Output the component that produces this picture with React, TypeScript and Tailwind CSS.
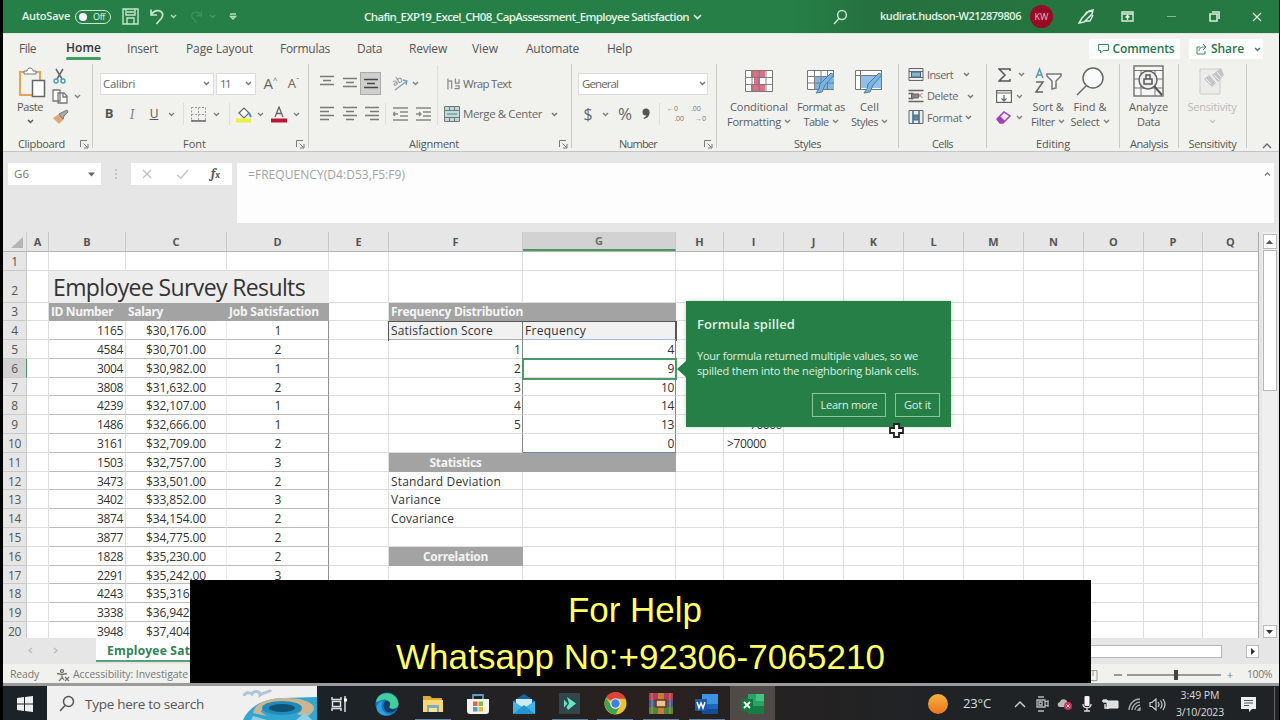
import React, { useLayoutEffect, useRef, useState } from "react";

/** Text whose letter spacing is adjusted so that the run is `w` pixels wide. */
function Fit({ w, className = "", children }: { w: number; className?: string; children: string }) {
  const ref = useRef<HTMLSpanElement>(null);
  const [ls, setLs] = useState(0);
  useLayoutEffect(() => {
    if (ref.current) {
      const natural = ref.current.getBoundingClientRect().width - ls * children.length;
      setLs((w - natural) / children.length);
    }
  }, [w, children]);
  return (
    <span ref={ref} className={"inline-block shrink-0 whitespace-pre " + className} style={{ letterSpacing: ls + "px" }}>
      {children}
    </span>
  );
}

function Chev({ className = "text-[#808080]" }: { className?: string }) {
  return (
    <svg className={"shrink-0 " + className} width="7" height="5" viewBox="0 0 7 5">
      <path d="M1 1l2.5 2.5L6 1" fill="none" stroke="currentColor" strokeWidth="1.4" />
    </svg>
  );
}

function Slot({ className, children }: { className: string; children?: React.ReactNode }) {
  return <div className={"flex shrink-0 items-center justify-center " + className}>{children}</div>;
}

function Launcher() {
  return (
    <svg width="9" height="9" viewBox="0 0 9 9" fill="none" stroke="#777" strokeWidth="1">
      <path d="M.5 7V.5H7M3.5 3.5l4 4M8 4v4H4" />
    </svg>
  );
}

function Group({ className, label, lw, launch, children }: { className: string; label: string; lw: number; launch?: boolean; children: React.ReactNode }) {
  return (
    <div className={"flex h-[84px] shrink-0 flex-col border-r border-[#c9c9c7] " + className}>
      <div className="h-[72px] shrink-0">{children}</div>
      <div className="flex h-[16px] shrink-0 items-center text-[11px] leading-[16px] text-[#555]">
        <div className="flex flex-1 justify-center">
          <Fit w={lw}>{label}</Fit>
        </div>
        {launch && <div className="mr-[3px]"><Launcher /></div>}
      </div>
    </div>
  );
}

function Lines({ rows, dark }: { rows: [number, number][]; dark?: boolean }) {
  return (
    <svg width="16" height="18" viewBox="0 0 16 18">
      {rows.map(([x, w], i) => (
        <path key={i} d={`M${x} ${2.5 + i * 4}h${w}`} stroke={dark ? "#444" : "#7a7a7a"} strokeWidth="1.5" />
      ))}
    </svg>
  );
}

function TitleBar() {
  return (
    <div className="flex h-[33px] items-center bg-gradient-to-r from-[#267f47] from-62% via-[#25713f] via-68% to-[#257a43] text-[#e3f3e6]">
      <Fit w={48} className="ml-[19px] text-[11px] font-semibold">AutoSave</Fit>
      <div className="ml-[5px] flex h-[14px] w-[36px] items-center justify-between rounded-full border border-[#cfe8d4] pr-[5px] pl-[3px]">
        <div className="h-[8px] w-[8px] rounded-full bg-white" />
        <Fit w={12} className="text-[9px] leading-[12px]">Off</Fit>
      </div>
      <svg className="ml-[11px]" width="17" height="17" viewBox="0 0 17 17" fill="none" stroke="#c5e6cd" strokeWidth="1.4">
        <path d="M1 1h15v15H1zM4 1v6h9V1M5 16v-6h7v6M5 4h7" />
      </svg>
      <svg className="ml-[10px]" width="17" height="17" viewBox="0 0 17 17" fill="none" stroke="#c5e6cd" strokeWidth="1.7">
        <path d="M2 1.5v5.5h6M2 7C5 2 11 1 13.5 5.5C15 10 10 12 7.500 16" />
      </svg>
      <Chev className="ml-[4px] text-[#b8dcc1]" />
      <svg className="ml-[12px]" width="14" height="16" viewBox="0 0 17 17" fill="none" stroke="#3b9159" strokeWidth="1.7">
        <path d="M15 1.500v5.500h-6M15 7C12 2 6 1 3.500 5.500C2 10 7 12 9.500 16" />
      </svg>
      <Chev className="ml-[6px] text-[#459963]" />
      <svg className="ml-[13px]" width="8" height="8" viewBox="0 0 8 8" fill="none" stroke="#b8dcc1" strokeWidth="1.3">
        <path d="M1 1h6M1.500 3.500L4 6l2.500-2.500z" />
      </svg>
      <Fit w={325} className="ml-[127px] text-[11.5px] font-semibold">Chafin_EXP19_Excel_CH08_CapAssessment_Employee Satisfaction</Fit>
      <svg className="ml-[4px]" width="9" height="6" viewBox="0 0 9 6" fill="none" stroke="#e3f3e6" strokeWidth="1.6"><path d="M1 1l3.500 3.500L8 1" /></svg>
      <svg className="ml-[131px]" width="16" height="16" viewBox="0 0 16 16" fill="none" stroke="#c9e5cf" strokeWidth="1.5"><circle cx="9" cy="6" r="4.400" /><path d="M6 9.500L1 15" /></svg>
      <Fit w={141} className="ml-[31px] text-[11px] font-semibold">kudirat.hudson-W212879806</Fit>
      <div className="ml-[9px] flex h-[23px] w-[23px] items-center justify-center rounded-full bg-[#960c26] text-[9px] text-[#efb7c1]">KW</div>
      <svg className="ml-[25px]" width="17" height="15" viewBox="0 0 17 15" fill="none" stroke="#d7eedb" strokeWidth="1.5"><path d="M1 14l5-1 8-8 1-4-4 1-7 7zM6 7l3-4 5-1M7 12h5l3-6" /></svg>
      <svg className="ml-[26px]" width="13" height="11" viewBox="0 0 13 11" fill="none" stroke="#d7eedb" strokeWidth="1.400"><path d="M1 1h11v9H1zM1 3h11M6.500 9V5M4.500 6.500l2-2 2 2" /></svg>
      <div className="ml-[33px] h-[1.500px] w-[9px] bg-[#7fba90]" />
      <svg className="ml-[33px]" width="11" height="11" viewBox="0 0 11 11" fill="none" stroke="#d7eedb" strokeWidth="1.600"><path d="M1 3h7v7H1zM3 1h7v7" /></svg>
      <svg className="ml-[32px]" width="10" height="10" viewBox="0 0 10 10" fill="none" stroke="#d7eedb" strokeWidth="1.300"><path d="M1 1l8 8M9 1L1 9" /></svg>
    </div>
  );
}

function MenuTabs() {
  return (
    <div className="flex h-[31px] items-center border-t border-[#d9eadc] bg-[#f1f2ee] text-[12px] text-[#555]">
      <Fit w={17} className="ml-[16px]">File</Fit>
      <div className="ml-[30px] flex h-full flex-col items-center pt-[5px]">
        <Fit w={35} className="font-semibold leading-[18px] text-[#333]">Home</Fit>
        <div className="h-[3px] w-[35px] rounded bg-[#3f9d5f]" />
      </div>
      <Fit w={31} className="ml-[26px]">Insert</Fit>
      <Fit w={67} className="ml-[28px]">Page Layout</Fit>
      <Fit w={50} className="ml-[27px]">Formulas</Fit>
      <Fit w={25} className="ml-[27px]">Data</Fit>
      <Fit w={38} className="ml-[27px]">Review</Fit>
      <Fit w={26} className="ml-[25px]">View</Fit>
      <Fit w={53} className="ml-[28px]">Automate</Fit>
      <Fit w={25} className="ml-[28px]">Help</Fit>
      <div className="mr-[16px] ml-auto flex gap-[9px] text-[#26764a]">
        <div className="flex h-[20px] w-[91px] items-center justify-center gap-[4px] bg-white pl-[3px]">
          <svg width="11" height="10" viewBox="0 0 11 10" fill="none" stroke="#3d8a5a"><path d="M.5.5h10v6H5L2.500 9V6.500h-2z" /></svg>
          <Fit w={62} className="font-semibold leading-[20px]">Comments</Fit>
        </div>
        <div className="flex h-[20px] w-[74px] items-center bg-white pl-[7px]">
          <svg width="11" height="12" viewBox="0 0 11 12" fill="none" stroke="#3d8a5a"><path d="M4 4H1v7h8V8M3 8c0-3 2-4 6-4M7 1l3 3-3 3" /></svg>
          <Fit w={33} className="ml-[4px] font-semibold leading-[20px]">Share</Fit>
          <Chev className="ml-[10px] text-[#3d8a5a]" />
        </div>
      </div>
    </div>
  );
}

function BigButton({ className, icon, a, aw, b, bw, chev, dim }: { className: string; icon: React.ReactNode; a: string; aw: number; b?: string; bw?: number; chev?: boolean; dim?: boolean }) {
  return (
    <div className={"flex h-[68px] shrink-0 flex-col items-center text-[11px] leading-[15px] " + (dim ? "text-[#b9b9b9] " : "text-[#5c5c5c] ") + className}>
      <div className="flex h-[34px] items-center">{icon}</div>
      <Fit w={aw} className="mt-[1px]">{a}</Fit>
      <div className="flex h-[15px] items-center gap-[3px]">
        {b && <Fit w={bw || 30}>{b}</Fit>}
        {chev && <Chev className={dim ? "text-[#c4c4c4]" : "text-[#808080]"} />}
      </div>
    </div>
  );
}

function Brush() {
  return <path d="M27 8l-9 10-3 7-6 1 3-4 1-5L24 6z" fill="#79b4e3" stroke="#4b7ba3" strokeWidth="1" />;
}

function Ribbon() {
  return (
    <div className="flex h-[88px] items-start border-b border-[#c4c4c4] bg-[#f1f2ee]">
      <Group className="w-[90px]" label="Clipboard" lw={47} launch>
        <div className="flex">
          <div className="flex w-[54px] flex-col items-center text-[#555]">
            <svg className="mt-[3px] ml-[4px]" width="28" height="32" viewBox="0 0 28 32" fill="none">
              <path d="M7 5H2v23h12M18 5h4v8" stroke="#e3a652" strokeWidth="2" />
              <path d="M6 7V4h3c0-4 6-4 6 0h3v3z" fill="#fff" stroke="#777" />
              <path d="M14.500 13.500h12v16h-12z" fill="#fff" stroke="#666" strokeWidth="1.500" />
            </svg>
            <Fit w={26} className="text-[11px] leading-[16px]">Paste</Fit>
            <Chev className="mt-[4px]" />
          </div>
          <div className="flex flex-col gap-[5px] pt-[4px]">
            <svg className="-ml-[4px]" width="14" height="16" viewBox="0 0 14 16" fill="none" strokeWidth="1.500"><path d="M3 1l6 10M10 1L4 11" stroke="#666" /><circle cx="3" cy="13" r="2" stroke="#4b9dbd" /><circle cx="10" cy="13" r="2" stroke="#4b9dbd" /></svg>
            <div className="-ml-[5px] flex items-center gap-[6px]">
              <svg width="16" height="15" viewBox="0 0 16 15" fill="#fff" stroke="#777" strokeWidth="1.300"><path d="M1 1h7v11H1zM6 4h6l3 3v7H6zM11 4v4h4" /></svg>
              <Chev />
            </div>
            <svg className="-ml-[5px]" width="17" height="16" viewBox="0 0 17 16"><path d="M1 9l6-4 5 5-5 5z" fill="#e0a877" /><path d="M7 5l4-2 4-2 1 2-4 4-1 3z" fill="#aaa" stroke="#777" /></svg>
          </div>
        </div>
      </Group>

      <Group className="w-[216px]" label="Font" lw={23} launch>
        <div className="mt-[8px] flex h-[23px] items-center pl-[7px] text-[11.500px] text-[#666]">
          <div className="flex h-[22px] w-[114px] items-center border border-[#dcdcdc] bg-white px-[2px]"><Fit w={32}>Calibri</Fit><Chev className="mr-[1px] ml-auto text-[#777]" /></div>
          <div className="ml-[2px] flex h-[22px] w-[40px] items-center border border-[#dcdcdc] bg-white px-[3px]"><Fit w={10}>11</Fit><Chev className="ml-auto text-[#777]" /></div>
          <Slot className="ml-[3px] w-[23px]"><span className="text-[15px]">A</span><span className="mb-[8px] text-[8px]">^</span></Slot>
          <Slot className="w-[23px]"><span className="text-[13px]">A</span><span className="mb-[8px] text-[8px]">ˇ</span></Slot>
        </div>
        <div className="mt-[8px] flex h-[22px] items-center pl-[2px] text-[#555]">
          <Slot className="w-[28px] text-[13px] font-bold">B</Slot>
          <Slot className="w-[18px] font-serif text-[14px] italic text-[#888]">I</Slot>
          <Slot className="w-[26px] text-[12px] underline">U</Slot>
          <Slot className="w-[8px]"><Chev /></Slot>
          <Slot className="ml-[8px] w-[1px] self-stretch bg-[#dedede]" />
          <Slot className="w-[28px]"><svg width="15" height="15" viewBox="0 0 15 15" fill="none" stroke="#999"><path d="M.5.5h14v13H.500zM7.500.500v13M.500 7.500h14" strokeDasharray="2 1.500" /><path d="M0 14h15" stroke="#666" strokeWidth="1.500" /></svg></Slot>
          <Slot className="w-[8px]"><Chev /></Slot>
          <Slot className="ml-[9px] w-[1px] self-stretch bg-[#dedede]" />
          <Slot className="w-[26px]"><svg width="17" height="17" viewBox="0 0 17 17"><path d="M4 7l5-5 5 5-5 5z" fill="#fff" stroke="#666" strokeWidth="1.200" /><path d="M14 7l2 4" stroke="#4b8fc0" strokeWidth="2" /><path d="M1 14.500h15" stroke="#e6f23f" strokeWidth="4" /></svg></Slot>
          <Slot className="w-[8px]"><Chev /></Slot>
          <Slot className="ml-[3px] w-[24px]"><svg width="16" height="17" viewBox="0 0 16 17"><path d="M4 11L8 1l4 10M5.500 7.500h5" fill="none" stroke="#666" strokeWidth="1.300" /><path d="M0 14.500h16" stroke="#bd1738" strokeWidth="4" /></svg></Slot>
          <Slot className="w-[10px]"><Chev /></Slot>
        </div>
      </Group>

      <Group className="w-[263px]" label="Alignment" lw={50} launch>
        <div className="flex">
          <div className="w-[128px]">
            <div className="mt-[8px] flex h-[23px] items-center pl-[6px]">
              <Slot className="w-[24px] pb-[2px]"><Lines rows={[[1, 14], [4, 8], [1, 14]]} /></Slot>
              <Slot className="w-[21px] pt-[2px]"><Lines rows={[[1, 14], [4, 8], [1, 14]]} /></Slot>
              <Slot className="h-[23px] w-[21px] border border-[#aaa] bg-[#cfcfcf] pt-[5px]"><Lines rows={[[1, 14], [4, 8], [1, 14]]} dark /></Slot>
              <div className="relative ml-[10px] flex h-[18px] w-[18px] items-center justify-center">
                <svg width="18" height="16" viewBox="0 0 18 16" fill="none" stroke="#7fa1b8" strokeWidth="1.300"><path d="M4 14L16 5M12 4l4 1-1 4" /></svg>
                <span className="absolute top-0 left-[1px] -rotate-30 text-[9px] leading-[12px] text-[#777]">ab</span>
              </div>
              <Slot className="ml-[2px] w-[8px]"><Chev /></Slot>
            </div>
            <div className="mt-[8px] flex h-[22px] items-center pl-[6px]">
              <Slot className="w-[24px]"><Lines rows={[[1, 14], [1, 9], [1, 14], [1, 9]]} /></Slot>
              <Slot className="w-[21px]"><Lines rows={[[1, 14], [4, 8], [1, 14], [4, 8]]} /></Slot>
              <Slot className="w-[23px]"><Lines rows={[[1, 14], [6, 9], [1, 14], [6, 9]]} /></Slot>
              <Slot className="ml-[2px] w-[1px] self-stretch bg-[#dedede]" />
              <Slot className="ml-[3px] w-[23px]"><svg width="15" height="16" viewBox="0 0 15 16" stroke="#888" fill="none" strokeWidth="1.400"><path d="M0 2h15M7 6h8M7 10h8M0 14h15M5 8H0M2 6L0 8l2 2" /></svg></Slot>
              <Slot className="w-[23px]"><svg width="15" height="16" viewBox="0 0 15 16" stroke="#888" fill="none" strokeWidth="1.400"><path d="M0 2h15M7 6h8M7 10h8M0 14h15M0 8h5M3 6l2 2-2 2" /></svg></Slot>
            </div>
          </div>
          <div className="h-[60px] w-[1px] self-center bg-[#dedede]" />
          <div className="text-[11.500px] text-[#666]">
            <div className="mt-[8px] flex h-[23px] items-center pl-[9px]">
              <svg width="13" height="14" viewBox="0 0 14 14" fill="none" stroke="#888"><path d="M1 1v12M5 3v9M1 4h4M9 1v5h4V2M9 9h4v3H8" strokeWidth="1.300" /></svg>
              <Fit w={48} className="ml-[3px]">Wrap Text</Fit>
            </div>
            <div className="mt-[8px] flex h-[22px] items-center pl-[6px]">
              <svg width="16" height="16" viewBox="0 0 16 16" fill="none" stroke="#777"><path d="M.5.5h15v15H.500z" fill="#b9dcdf" /><path d="M.5 4.500h15M.5 11.500h15M5.500.500v4M10.500.500v4M5.500 11.500v4M10.500 11.500v4M3 8h10" /></svg>
              <Fit w={79} className="ml-[3px]">Merge & Center</Fit>
              <Chev className="ml-[9px] text-[#777]" />
            </div>
          </div>
        </div>
      </Group>

      <Group className="w-[145px]" label="Number" lw={38} launch>
        <div className="mt-[8px] flex h-[23px] items-center pl-[6px] text-[11.500px] text-[#666]">
          <div className="flex h-[22px] w-[130px] items-center border border-[#dcdcdc] bg-white pr-[1px] pl-[3px]"><Fit w={36}>General</Fit><Chev className="ml-auto text-[#777]" /></div>
        </div>
        <div className="mt-[8px] flex h-[22px] items-center pl-[6px] text-[#666]">
          <Slot className="w-[20px] text-[16px]">$</Slot>
          <Slot className="w-[15px]"><Chev /></Slot>
          <Slot className="w-[24px] text-[17px]">%</Slot>
          <svg className="ml-[4px]" width="10" height="12" viewBox="0 0 10 12"><circle cx="5" cy="4" r="3.500" fill="#555" /><path d="M8.500 4c0 4-2 6-5.500 7l-.5-1c2-1 3-2 3-4z" fill="#555" /></svg>
          <Slot className="ml-[8px] w-[1px] self-stretch bg-[#dedede]" />
          <div className="ml-[7px] flex w-[17px] flex-col text-[7px] leading-[10px] text-[#777]"><span>←0</span><span className="self-end">.00</span></div>
          <div className="ml-[7px] flex w-[15px] flex-col text-[7px] leading-[10px] text-[#777]"><span>.00</span><span className="self-end">→0</span></div>
        </div>
      </Group>

      <Group className="w-[182px]" label="Styles" lw={27}>
        <div className="flex">
          <BigButton className="w-[84px]" a="Conditional" aw={58} b="Formatting" bw={54} chev icon={
            <svg width="28" height="24" viewBox="0 0 28 24"><path d="M.5 1.500h27v21H.500z" fill="#fff" stroke="#777" /><path d="M6 2h14v7H6zM6 15h14v7H6zM9 9h6v6H9z" fill="#dc6f87" /><path d="M7 1v22M14 1v22M21 1v22M1 8.500h27M1 15.500h27" stroke="#777" strokeWidth=".9" /></svg>} />
          <BigButton className="w-[40px]" a="Format as" aw={48} b="Table" bw={25} chev icon={
            <svg width="29" height="28" viewBox="0 0 29 28"><path d="M.5 3.500h26v19H.500z" fill="#fff" stroke="#777" /><path d="M8 9h19v13H8z" fill="#7fb5e2" /><path d="M7.500 3v19M14 3v19M20.500 3v19M1 9.500h26M1 16h26" stroke="#777" strokeWidth=".9" /><Brush /></svg>} />
          <BigButton className="w-[57px]" a="Cell" aw={19} b="Styles" bw={27} chev icon={
            <svg width="29" height="28" viewBox="0 0 29 28"><path d="M.5 3.500h26v19H.500z" fill="#fff" stroke="#777" /><path d="M6 8h20v13H6z" fill="#8fc0ea" /><path d="M5.500 3v19M1 8.500h26" stroke="#777" /><Brush /></svg>} />
        </div>
      </Group>

      <Group className="w-[88px]" label="Cells" lw={21}>
        <div className="flex flex-col pl-[9px] text-[11px] text-[#666]">
          <div className="flex h-[21.500px] items-center"><svg width="16" height="14" viewBox="0 0 15 14" fill="none" stroke="#666"><path d="M.5.5h14v12H.500z" fill="#e8eef0" /><path d="M3 4h9v5H3z" fill="#79b8ce" stroke="#558" /><path d="M.5 3.500h14M.5 9.500h14" /></svg><Fit w={26} className="ml-[3px]">Insert</Fit><Chev className="ml-[10px] text-[#777]" /></div>
          <div className="flex h-[21.500px] items-center"><svg width="16" height="14" viewBox="0 0 15 14" fill="none" stroke="#666"><path d="M0 1.500h15M0 12.500h15M0 4.500h5M0 9.500h5" strokeWidth="1.400" /><path d="M3 5h7v4H3z" fill="#888" /><path d="M9 4l5 5M14 4L9 9" stroke="#c26a78" /></svg><Fit w={31} className="ml-[3px]">Delete</Fit><Chev className="ml-[9px] text-[#777]" /></div>
          <div className="flex h-[21.500px] items-center"><svg width="16" height="15" viewBox="0 0 15 15" fill="none" stroke="#666"><path d="M.5.5h14v13H.500z" fill="#e8eef0" /><path d="M4.500 1v13M10.500 1v13" stroke="#3d6e8c" strokeWidth="1.500" /><path d="M5 5h5v5H5z" fill="#4d8eb4" /></svg><Fit w={35} className="ml-[3px]">Format</Fit><Chev className="ml-[3px] text-[#777]" /></div>
        </div>
      </Group>

      <Group className="w-[133px]" label="Editing" lw={34}>
        <div className="flex pl-[9px]">
          <div className="flex w-[32px] flex-col">
            <div className="flex h-[21.500px] items-center gap-[7px] pl-[2px]"><svg width="13" height="14" viewBox="0 0 13 14" fill="none" stroke="#555" strokeWidth="1.500"><path d="M12 3V1H1l6 6-6 6h11v-2" /></svg><Chev /></div>
            <div className="flex h-[21.500px] items-center gap-[4px]"><svg width="16" height="13" viewBox="0 0 16 13" fill="#fff" stroke="#666" strokeWidth="1.200"><path d="M.6.6h14.800v11.800H.600zM.6 3h14.800M8 5v6M5.500 8.500L8 11l2.500-2.500" /></svg><Chev /></div>
            <div className="flex h-[21.500px] items-center gap-[5px]"><svg width="15" height="13" viewBox="0 0 15 13"><path d="M1 8l7-7 6 4-7 7H4z" fill="#f3e6f6" stroke="#a33fb8" strokeWidth="1.500" /><path d="M1 8l3-3 5 5-2 2H4z" fill="#a33fb8" /></svg><Chev /></div>
          </div>
          <BigButton className="w-[40px]" a="Sort &" aw={31} b="Filter" bw={24} chev icon={
            <svg width="27" height="28" viewBox="0 0 27 28" fill="none" strokeWidth="1.500"><path d="M1 11L4.500 2 8 11M2.500 8h4" stroke="#5b9bb0" /><path d="M1 15h7l-7 10h7" stroke="#666" /><path d="M12 7h14v2l-5 5v7l-4 1v-8l-5-5z" stroke="#777" fill="#f8fbfb" /></svg>} />
          <BigButton className="w-[44px]" a="Find &" aw={33} b="Select" bw={29} chev icon={
            <svg width="28" height="30" viewBox="0 0 28 30" fill="none" stroke="#666" strokeWidth="1.500"><circle cx="17" cy="12" r="10" fill="#fafbfb" /><path d="M10 20L1 29" /></svg>} />
        </div>
      </Group>

      <Group className="w-[59px]" label="Analysis" lw={38}>
        <BigButton className="w-[57px]" a="Analyze" aw={39} b="Data" bw={23} icon={
          <svg width="31" height="32" viewBox="0 0 31 32" fill="none" stroke="#777"><path d="M1 1h29v30H1z" fill="#f6f6f6" strokeWidth="1.500" /><path d="M1 5.500h29M8 6v25M22 6v25M1 14h29M1 23h29" /><circle cx="15" cy="15" r="9" fill="#eee" stroke="#666" strokeWidth="1.500" /><path d="M21 21l8 9" stroke="#555" strokeWidth="2" /><path d="M11 19v-5h8v5zM13 14v-4h4v4" stroke="#555" strokeWidth="1.500" /></svg>} />
      </Group>

      <Group className="w-[68px]" label="Sensitivity" lw={48}>
        <BigButton dim className="w-[66px]" a="Sensitivity" aw={49} chev icon={
          <svg width="28" height="30" viewBox="0 0 28 30"><path d="M2 3h20v25H2z" fill="#ececec" stroke="#ccc" /><path d="M6 13l8 8 4-4-7-8zM14 9l6 7 6-7-3-7z" fill="#c4c4c4" /><path d="M8 13l5 5M16 9l5 5M19 6l4 5" stroke="#f3f3f3" /></svg>} />
      </Group>
      <svg className="mt-[78px] ml-[15px]" width="10" height="7" viewBox="0 0 10 7" fill="none" stroke="#666" strokeWidth="1.400"><path d="M1 6l4-4 4 4" /></svg>
    </div>
  );
}

function FormulaBar() {
  return (
    <div className="flex h-[80px] items-start bg-[#e6e6e6] pt-[11px] text-[11.500px]">
      <div className="ml-[5px] flex h-[22px] w-[93px] items-center bg-white px-[6px] text-[#777]">
        <Fit w={15}>G6</Fit>
        <svg className="ml-auto" width="7" height="5" viewBox="0 0 7 5"><path d="M0 .5h7L3.500 4.500z" fill="#666" /></svg>
      </div>
      <div className="flex h-[22px] w-[30px] flex-col items-center justify-center gap-[2px]"><i className="h-[2px] w-[2px] bg-[#c4c4c4]" /><i className="h-[2px] w-[2px] bg-[#c4c4c4]" /><i className="h-[2px] w-[2px] bg-[#c4c4c4]" /></div>
      <div className="flex h-[22px] w-[101px] items-center bg-white">
        <svg className="ml-[11px]" width="10" height="10" viewBox="0 0 10 10" stroke="#c4c4c4" strokeWidth="1.500"><path d="M1 1l8 8M9 1L1 9" /></svg>
        <svg className="ml-[24px]" width="13" height="10" viewBox="0 0 13 10" fill="none" stroke="#c4c4c4" strokeWidth="1.500"><path d="M1 6l4 3 7-8" /></svg>
        <span className="ml-[22px] font-serif text-[13px] font-bold italic text-[#555]">f<span className="text-[10px]">x</span></span>
      </div>
      <div className="ml-[5px] flex h-[60px] w-[1037px] items-start justify-between bg-[#fdfdfd] pl-[11px] text-[#a2a2a2]">
        <Fit w={157} className="text-[12px] leading-[23px]">=FREQUENCY(D4:D53,F5:F9)</Fit>
        <svg className="mt-[8px] mr-[3px]" width="7" height="5" viewBox="0 0 7 5" fill="none" stroke="#777" strokeWidth="1.300"><path d="M1 4.500L3.500 2 6 4.500" /></svg>
      </div>
    </div>
  );
}

const COLS: [string, string][] = [
  ["A", "w-[22px]"], ["B", "w-[77px]"], ["C", "w-[101px]"], ["D", "w-[102px]"], ["E", "w-[60px]"], ["F", "w-[134px]"], ["G", "w-[153px]"], ["H", "w-[48px]"],
  ["I", "w-[60px]"], ["J", "w-[60px]"], ["K", "w-[60px]"], ["L", "w-[60px]"], ["M", "w-[60px]"], ["N", "w-[60px]"], ["O", "w-[60px]"], ["P", "w-[59px]"], ["Q", "w-[56px]"],
];

const DATA: [string, string, string][] = [
  ["1165", "$30,176.00", "1"], ["4584", "$30,701.00", "2"], ["3004", "$30,982.00", "1"], ["3808", "$31,632.00", "2"], ["4239", "$32,107.00", "1"],
  ["1486", "$32,666.00", "1"], ["3161", "$32,709.00", "2"], ["1503", "$32,757.00", "3"], ["3473", "$33,501.00", "2"], ["3402", "$33,852.00", "3"],
  ["3874", "$34,154.00", "2"], ["3877", "$34,775.00", "2"], ["1828", "$35,230.00", "2"], ["2291", "$35,242.00", "3"], ["4243", "$35,316.00", "2"],
  ["3338", "$36,942.00", "1"], ["3948", "$37,404.00", "2"],
];
const FREQ = ["4", "9", "10", "14", "13", "0"];

function cell(r: number, c: string): { text?: string; w?: number; cls: string } {
  const grid = "border-r-[#dedede] border-b-[#dedede] text-[12px] ";
  const table = "border-b-[#bcbcbc] text-[12px] ";
  const head = "bg-[#a3a3a3] border-r-[#a3a3a3] border-b-[#a3a3a3] text-[#f4f4f4] text-[12px] font-bold ";
  if (r >= 4) {
    const d = DATA[r - 4];
    if (c === "B") return { text: d[0], w: 26, cls: table + "border-r-[#dedede] justify-end pr-[2px]" };
    if (c === "C") return { text: d[1], w: 60, cls: table + "border-r-[#e9e9e9] justify-center" };
    if (c === "D") return { text: d[2], w: 6, cls: table + "border-r-[#8e8e8e] justify-center" };
  }
  if (r === 2 && (c === "B" || c === "C" || c === "D")) {
    const title = "bg-[#ededed] border-r-[#ededed] border-b-[#ededed] ";
    return c === "B" ? { text: "Employee Survey Results", w: 252, cls: title + "z-10 pl-[4px] text-[23px] text-[#1f1f1f]" } : { cls: title };
  }
  if (r === 3) {
    if (c === "B") return { text: "ID Number", w: 62, cls: head + "pl-[2px]" };
    if (c === "C") return { text: "Salary", w: 35, cls: head + "pl-[2px]" };
    if (c === "D") return { text: "Job Satisfaction", w: 90, cls: head + "pl-[2px]" };
    if (c === "F") return { text: "Frequency Distribution", w: 132, cls: head + "z-10 pl-[2px]" };
    if (c === "G") return { cls: head };
  }
  if (r === 4 && c === "F") return { text: "Satisfaction Score", w: 102, cls: "bg-[#f1f1f1] border-r-[#777] border-b-[#b3aaa7] text-[12px] pl-[2px]" };
  if (r === 4 && c === "G") return { text: "Frequency", w: 61, cls: "bg-[#f1f1f1] border-r-[#555] border-b-[#9fc1e0] text-[12px] pl-[2px]" };
  if (r >= 5 && r <= 10) {
    if (c === "F") return { text: r < 10 ? String(r - 4) : undefined, w: 7, cls: "border-r-[#888] border-b-[#dedede] text-[12px] justify-end pr-[1px]" };
    if (c === "G") return { text: FREQ[r - 5], w: FREQ[r - 5].length * 6.5, cls: "border-r-[#888] text-[12px] justify-end pr-[1px] " + (r === 10 ? "border-b-[#71879b]" : "border-b-[#dedede]") };
  }
  if (r === 11 && c === "F") return { text: "Statistics", w: 52, cls: head + "justify-center" };
  if (r === 11 && c === "G") return { cls: head };
  if (r === 12 && c === "F") return { text: "Standard Deviation", w: 110, cls: grid + "pl-[2px]" };
  if (r === 13 && c === "F") return { text: "Variance", w: 50, cls: grid + "pl-[2px]" };
  if (r === 14 && c === "F") return { text: "Covariance", w: 63, cls: grid + "pl-[2px]" };
  if (r === 16 && c === "F") return { text: "Correlation", w: 65, cls: head + "justify-center" };
  if (r === 9 && c === "I") return { text: "70000", w: 32, cls: grid + "justify-end pr-[1px]" };
  if (r === 10 && c === "I") return { text: ">70000", w: 39, cls: grid + "pl-[3px]" };
  return { cls: grid };
}

function Sheet() {
  const rows = Array.from({ length: 20 }, (_, i) => i + 1);
  return (
    <div className="relative z-0 flex h-[406px] bg-[#e6e6e6]">
      <div className="h-[406px] w-[1256px] shrink-0 overflow-hidden border-r border-[#aaa]">
        <div className="flex h-[20px] border-b border-[#b5b5b5] text-[11px] font-bold text-[#555]">
          <div className="flex w-[24px] shrink-0 items-end justify-end border-r border-[#ccc] pr-[3px] pb-[3px]"><svg width="12" height="11" viewBox="0 0 12 11"><path d="M12 0v11H0z" fill="#b5b5b5" /></svg></div>
          {COLS.map(([c, w]) => (
            <div key={c} className={"flex shrink-0 items-center justify-center border-r border-r-[#c9c9c9] pt-[1px] " + w + (c === "G" ? " border-b-2 border-b-[#4b9566] bg-[#d2d2d2] text-[#5f7567]" : "")}>{c}</div>
          ))}
        </div>
        <div className="bg-white">
          {rows.map((r) => (
            <div key={r} className={"flex " + (r === 1 ? "h-[19px]" : r === 2 ? "h-[31.500px]" : "h-[18.800px]")}>
              <div className={"flex w-[24px] shrink-0 items-center justify-center border-r border-b text-[12px] text-[#555] " + (r === 6 ? "border-r-[#4b9566] border-b-[#c9c9c9] bg-[#d2d2d2]" : "border-[#c9c9c9] bg-[#e6e6e6]") + (r === 2 ? " pt-[9px]" : " pt-[2px]")}>
                <Fit w={r > 9 ? 13 : 6.5}>{String(r)}</Fit>
              </div>
              {COLS.map(([c, w]) => {
                const k = cell(r, c);
                return (
                  <div key={c} className={"relative flex shrink-0 items-center border-r border-b pt-[2px] leading-none text-[#333] " + w + " " + k.cls}>
                    {k.text && <Fit w={k.w || 10}>{k.text}</Fit>}
                  </div>
                );
              })}
            </div>
          ))}
        </div>
      </div>
      <div className="ml-[3px] flex w-[15px] flex-col items-center bg-[#efefef] pt-[2px]">
        <div className="flex h-[15px] w-[14px] items-center justify-center border border-[#bbb] bg-white"><svg width="7" height="4" viewBox="0 0 7 4"><path d="M0 4h7L3.500 0z" fill="#555" /></svg></div>
        <div className="mt-[1px] h-[141px] w-[14px] border border-[#b5b5b5] bg-white" />
        <div className="mt-auto flex h-[13px] w-[14px] items-center justify-center border border-[#bbb] bg-white"><svg width="7" height="4" viewBox="0 0 7 4"><path d="M0 0h7L3.500 4z" fill="#333" /></svg></div>
      </div>
      <div className="absolute top-[89px] left-[385px] h-[20px] w-[289px] border-x-[1.500px] border-t border-[#555]" />
      <div className="absolute top-[126px] left-[519px] h-[22px] w-[155px] border-2 border-[#4a9a68]" />
      <Callout />
    </div>
  );
}

function Callout() {
  return (
    <div className="absolute top-[69px] left-[683px] z-20 flex h-[126px] w-[265px] flex-col bg-[#267f47] pt-[14px] pl-[11px] text-[#dff2e2] shadow-[0_0_5px_rgba(90,140,100,0.35)]">
      <svg className="absolute top-[59px] -left-[9px]" width="10" height="18" viewBox="0 0 10 18"><path d="M10 0v18L0 9z" fill="#267f47" /></svg>
      <Fit w={98} className="self-start text-[13px] leading-[18px] font-semibold">Formula spilled</Fit>
      <Fit w={221} className="mt-[15px] self-start text-[11px] leading-[15px]">Your formula returned multiple values, so we</Fit>
      <Fit w={222} className="self-start text-[11px] leading-[15px]">spilled them into the neighboring blank cells.</Fit>
      <div className="mt-[15px] mr-[11px] flex justify-end gap-[9px] text-[11px]">
        <div className="flex h-[24px] w-[74px] items-center justify-center border border-[#8cc79c]"><Fit w={57}>Learn more</Fit></div>
        <div className="flex h-[24px] w-[45px] items-center justify-center border border-[#8cc79c]"><Fit w={27}>Got it</Fit></div>
      </div>
    </div>
  );
}

function SheetTabs() {
  return (
    <div className="flex h-[26px] items-start bg-[#e6e6e6]">
      <svg className="mt-[9px] ml-[23px]" width="34" height="7" viewBox="0 0 34 7" fill="none" stroke="#bbb" strokeWidth="1.300"><path d="M6 1L3 3.500 6 6M28 1l3 2.500L28 6" /></svg>
      <div className="ml-[36px] flex h-[24px] w-[240px] items-center border-b-2 border-[#5aa276] bg-white pt-[3px] pl-[11px] text-[12px] font-bold text-[#2f8254]">
        <Fit w={137}>Employee Satisfaction</Fit>
      </div>
      <div className="mt-[7px] ml-auto flex">
        <div className="h-[13px] w-[400px] border border-[#b5b5b5] bg-white" />
        <div className="mr-[20px] ml-[24px] flex h-[13px] w-[13px] items-center justify-center border border-[#bbb] bg-white"><svg width="4" height="7" viewBox="0 0 4 7"><path d="M0 0v7l4-3.500z" fill="#333" /></svg></div>
      </div>
    </div>
  );
}

function StatusBar() {
  return (
    <div className="flex h-[19px] items-center bg-[#f1f2ee] pt-[3px] text-[10.500px] text-[#777]">
      <Fit w={29} className="ml-[7px]">Ready</Fit>
      <svg className="ml-[17px]" width="14" height="13" viewBox="0 0 14 13" fill="none" stroke="#777" strokeWidth="1.300"><circle cx="6" cy="2" r="1.500" /><path d="M1 4.500l5 1 5-1M6 5.500v3L3 12M6 8l2 3M9 8l4 4M13 8l-4 4" /></svg>
      <Fit w={115} className="ml-[3px]">Accessibility: Investigate</Fit>
      <svg className="ml-auto" width="9" height="11" viewBox="0 0 9 11" fill="none" stroke="#999"><path d="M0 .5h8v10H0M4 1v5" /></svg>
      <div className="ml-[16px] h-[1.500px] w-[8px] bg-[#999]" />
      <div className="ml-[5px] flex w-[94px] items-center justify-center">
        <div className="h-[2px] w-[47px] bg-[#999]" /><div className="h-[10px] w-[4px] bg-[#444]" /><div className="h-[2px] w-[43px] bg-[#999]" />
      </div>
      <span className="ml-[5px] w-[8px] text-center leading-none">+</span>
      <Fit w={25} className="mr-[7px] ml-[13px]">100%</Fit>
    </div>
  );
}

function TaskApp({ children, active, open }: { children: React.ReactNode; active?: boolean; open?: boolean }) {
  return (
    <div className={"flex h-full w-[45.700px] shrink-0 flex-col items-center justify-between " + (active ? "bg-[#4f4a48]" : "")}>
      <div className="flex flex-1 items-center pt-[2px]">{children}</div>
      <div className={"h-[1px] w-[36px] " + (open ? "bg-[#5d84a8]" : "")} />
    </div>
  );
}

function Taskbar() {
  return (
    <div className="flex h-[34px] items-stretch bg-gradient-to-r from-[#1b2228] from-25% via-[#29211f] via-50% to-[#1f2326] to-75% text-[#ddd]">
      <div className="flex w-[44px] items-center justify-center pt-[2px]">
        <svg width="16" height="16" viewBox="0 0 16 16" fill="#eee"><path d="M0 2l7-1v6.500H0zM8 1l8-1v7.500H8zM0 8.500h7V15l-7-1zM8 8.500h8V16l-8-1z" /></svg>
      </div>
      <div className="flex w-[270px] items-center overflow-hidden bg-[#f0f0f0] pl-[12px] text-[#555]">
        <svg width="16" height="17" viewBox="0 0 16 17" fill="none" stroke="#555" strokeWidth="1.500"><circle cx="9.500" cy="6.500" r="5" /><path d="M6 10.500L1 16" /></svg>
        <Fit w={119} className="ml-[10px] pt-[3px] text-[13.500px]">Type here to search</Fit>
        <svg className="ml-auto" width="76" height="34" viewBox="0 0 76 34">
          <path d="M3 10c1-4 6-4 8-2 2-4 8-3 8 1 4-3 10-3 11-5" stroke="#b5c3d3" strokeWidth="3" fill="none" />
          <path d="M2 34C8 20 22 13 42 12l34-1v23z" fill="#33a5d2" />
          <path d="M12 27c2-10 14-15 32-15 18 0 29 5 29 10s-8 9-8 9l-9-3c20-10-34-14-36-2l6 4z" fill="#cbb693" />
          <ellipse cx="41" cy="22" rx="20" ry="7" fill="#218cb8" /><ellipse cx="41" cy="22" rx="13" ry="4" fill="#0e5277" />
          <path d="M12 30l14 4h-16zM55 34l9-7 7 7z" fill="#8fd0e4" />
        </svg>
      </div>
      <div className="flex w-[47px] items-center justify-center pt-[2px] pr-[2px]">
        <svg width="17" height="16" viewBox="0 0 17 16" fill="none" stroke="#ddd" strokeWidth="1.500"><path d="M1 1v2.500h9V1M1 15v-2.500h9V15M1.500 5.500h8v5h-8zM14 0v16" /><path d="M13 4h3" stroke="#fff" strokeWidth="3" /></svg>
      </div>
      <TaskApp><svg width="24" height="24" viewBox="0 0 24 24"><circle cx="12" cy="12" r="11.500" fill="#1677bf" /><path d="M1 10C3-2 22-2 23.500 12c0 5-8 6-9 3 2-5-3-9-8-7-3 1-5 2-5.500 2z" fill="#45cf98" /><path d="M8 9c-4 6 0 13 8 13-8 5-18-3-13-10 1-2 3-3 5-3z" fill="#2b9fe0" /><path d="M10 9c6-1 6 4 4 6 1 3 7 3 9 0-2 6-12 8-14 1-1-3 0-5 1-7z" fill="#123f66" /></svg></TaskApp>
      <TaskApp open><svg width="20" height="18" viewBox="0 0 20 18"><path d="M0 1h7l2 2h10v13H0z" fill="#dfa936" /><path d="M0 5h20v12H0z" fill="#f8d873" /><path d="M4 10h12v7H4z" fill="#7eacc0" /><path d="M6 13h8v4H6z" fill="#eee6a0" /></svg></TaskApp>
      <TaskApp><svg width="22" height="22" viewBox="0 0 22 22"><path d="M6 6V2h10v4" fill="none" stroke="#5fa1bb" strokeWidth="1.800" /><path d="M0 6h22v12q0 3-3 3H3q-3 0-3-3z" fill="#f3f3ee" /><path d="M6 8.500h4.500V13H6z" fill="#e16449" /><path d="M11.500 8.500H16V13h-4.500z" fill="#86b84a" /><path d="M6 14h4.500v4.500H6z" fill="#4c9dc9" /><path d="M11.500 14H16v4.500h-4.500z" fill="#eab93c" /></svg></TaskApp>
      <TaskApp><svg width="24" height="22" viewBox="0 0 24 22"><path d="M1 8L12 1l11 7v4H1z" fill="#17639e" /><path d="M4 6h16v9H4z" fill="#cfeaf5" /><path d="M1 8l11 7 11-7v13H1z" fill="#45b3e3" /><path d="M1 21l11-9 11 9z" fill="#2594d0" /></svg></TaskApp>
      <TaskApp open><svg width="21" height="21" viewBox="0 0 21 21"><path d="M0 0h21v21H0z" fill="#31464a" /><path d="M5 6.500L8.500 10.500 5 14.500zM8 4l9 6.500L9 17l-1.500-3 2.500-3.500z" fill="#67e5c5" /></svg></TaskApp>
      <TaskApp open><svg width="23" height="23" viewBox="0 0 24 24"><circle cx="12" cy="12" r="11.500" fill="#e8c331" /><path d="M12 12L2 6C7-2 19-2 22.500 7H12z" fill="#dc4437" /><path d="M2 6C-2 13 3 23 12 23.500L17 14 7 13z" fill="#3fa353" /><circle cx="12" cy="12" r="5.500" fill="#f4f4f4" /><circle cx="12" cy="12" r="4.400" fill="#3e7fe0" /></svg></TaskApp>
      <TaskApp open><svg width="24" height="21" viewBox="0 0 24 21"><path d="M0 0h24v7H0z" fill="#b43961" /><path d="M0 7h24v7H0z" fill="#41599e" /><path d="M0 14h24v7H0z" fill="#4c8540" /><path d="M9 0h6v21H9z" fill="#c38034" /><path d="M7 7h10v7H7z" fill="#e6c88a" stroke="#6f2f22" strokeWidth="1.500" /><path d="M3 0v21M21 0v21" stroke="#c9983f" /></svg></TaskApp>
      <TaskApp open><svg width="23" height="20" viewBox="0 0 23 20"><path d="M7 0h16v20H7z" fill="#3c93df" /><path d="M7 10h16v5H7z" fill="#1f67bd" /><path d="M7 15h16v5H7z" fill="#164c94" /><path d="M0 5h12v12H0z" fill="#1b56a8" /><path d="M2 8l2 6 2-5 2 5 2-6" fill="none" stroke="#fff" strokeWidth="1.500" /></svg></TaskApp>
      <TaskApp active><svg width="23" height="20" viewBox="0 0 23 20"><path d="M7 0h16v20H7z" fill="#2ca366" /><path d="M15 0h8v7h-8z" fill="#43c481" /><path d="M7 12h16v8H7z" fill="#187d42" /><path d="M0 5h12v12H0z" fill="#117a3d" /><path d="M3 8l6 6M9 8l-6 6" stroke="#fff" strokeWidth="1.800" /></svg></TaskApp>
      <div className="ml-auto flex items-center pt-[2px]">
        <div className="mr-[6px] h-[20px] w-[20px] rounded-full bg-gradient-to-b from-[#f5b23e] to-[#e8741f]" />
        <Fit w={28} className="ml-[9px] text-[13px]">23°C</Fit>
        <svg className="ml-[23px]" width="12" height="8" viewBox="0 0 12 8" fill="none" stroke="#ccc" strokeWidth="1.500"><path d="M1 7l5-5 5 5" /></svg>
        <svg className="ml-[10px]" width="13" height="16" viewBox="0 0 13 16" fill="none" stroke="#bbb" strokeWidth="1.300"><path d="M1 4h8v7H1zM9 6l3-1v5l-3-1M2 1h6M2 15h6M3 6h3v3H3z" /></svg>
        <svg className="ml-[8px]" width="15" height="12" viewBox="0 0 15 12"><path d="M3 9C-1 8 1 4 3 4c1-4 7-3 7 0 3 0 4 5 1 5z" fill="#bbb" /><circle cx="11" cy="8" r="4" fill="#d13354" /><path d="M9.500 6.500l3 3M12.500 6.500l-3 3" stroke="#fff" /></svg>
        <svg className="ml-[10px]" width="10" height="16" viewBox="0 0 10 16"><rect x="2.500" y="0" width="5" height="10" rx="1" fill="#f4f4f4" /><path d="M1 8c0 5 8 5 8 0M5 12v3M2 15h6" fill="none" stroke="#ddd" strokeWidth="1.300" /></svg>
        <svg className="ml-[10px]" width="17" height="12" viewBox="0 0 17 12"><path d="M5 3h11v7H5z" fill="#ddd" stroke="#eee" /><path d="M0 3h6M2 1v4M4 1v4M3 6v4h4" stroke="#eee" fill="none" strokeWidth="1.300" /></svg>
        <svg className="ml-[9px]" width="13" height="13" viewBox="0 0 13 13" fill="none" stroke="#aaa" strokeWidth="1.300"><path d="M1 12C1 6 6 1 12 1M4 12c0-4 4-8 8-8M7 12c0-3 3-5 5-5M10 12l2-2v2z" /></svg>
        <svg className="ml-[8px]" width="17" height="13" viewBox="0 0 17 13" fill="none" stroke="#ccc" strokeWidth="1.200"><path d="M1 4.500h2L7 1v11L3 8.500H1zM9 4q2 2.500 0 5M11.500 2.500q3 4 0 8M14 1q4 5.500 0 11" /></svg>
        <div className="ml-[8px] flex w-[52px] flex-col items-center text-[10.500px] leading-[17px]"><Fit w={39}>3:49 PM</Fit><Fit w={48}>3/10/2023</Fit></div>
        <svg className="mr-[17px] ml-[15px]" width="16" height="15" viewBox="0 0 16 15"><path d="M0 0h15v12h-4l-3 3v-3H0z" fill="#eee" /><path d="M3 3.500h9M3 6h9M3 8.500h5" stroke="#555" /></svg>
        <div className="mr-[4px] h-[34px] w-[1px] bg-[#666]" />
      </div>
    </div>
  );
}

export default function App() {
  return (
    <div className="relative flex h-[720px] w-[1280px] overflow-hidden bg-black pr-[1px] pl-[3px] font-['Open_Sans','Noto_Sans',sans-serif]">
      <div className="flex w-[1276px] flex-col">
        <TitleBar />
        <MenuTabs />
        <Ribbon />
        <FormulaBar />
        <Sheet />
        <SheetTabs />
        <StatusBar />
        <div className="h-[3px] bg-[#9b9b9b]" />
        <Taskbar />
      </div>
      <svg className="absolute top-[423px] left-[889px]" width="15" height="15" viewBox="0 0 15 15"><path d="M5 1h5v4h4v5h-4v4H5v-4H1V5h4z" fill="#fff" stroke="#222" strokeWidth="1.800" /></svg>
      <div className="absolute top-[580px] left-[190px] flex h-[103px] w-[901px] flex-col items-center bg-black pt-[6px] font-['Liberation_Sans',Arial,sans-serif] text-[35px] leading-[47px] text-[#ffff66]">
        <Fit w={134} className="mr-[11px]">For Help</Fit>
        <Fit w={489}>Whatsapp No:+92306-7065210</Fit>
      </div>
    </div>
  );
}
